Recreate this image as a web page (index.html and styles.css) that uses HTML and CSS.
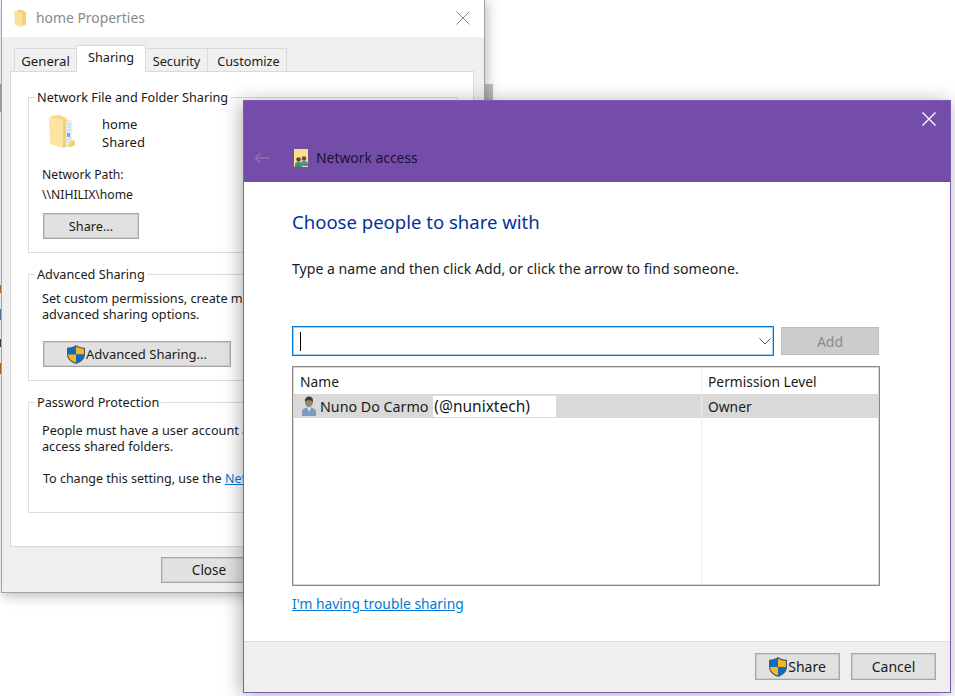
FILE: index.html
```html
<!DOCTYPE html>
<html lang="en">
<head>
    <meta charset="UTF-8">
    <title>home Properties</title>
    <link rel="stylesheet" href="styles.css">
</head>
<body>

<svg width="0" height="0" class="defs">
    <symbol id="shield" viewBox="1 0.5 16 19.2" preserveAspectRatio="none">
        <path d="M9 .6C6.800 2.400 4 3.200 1 3.200V10c0 4.600 3.400 7.800 8 9.600 4.600-1.800 8-5 8-9.600V3.200C14 3.200 11.200 2.400 9 .6z" fill="#4a5a6a"/>
        <path d="M9 2C7 3.400 4.600 4.200 2 4.300V10h7z" fill="#0f6cc4"/>
        <path d="M9 2c2 1.400 4.400 2.200 7 2.300V10H9z" fill="#f8b71c"/>
        <path d="M2 10c0 3.900 3 6.600 7 8.300V10z" fill="#f8b71c"/>
        <path d="M16 10c0 3.900-3 6.600-7 8.300V10z" fill="#0f6cc4"/>
    </symbol>
    <symbol id="folder" viewBox="0 0 26 33">
        <path d="M2 1l8-1 8 3v2l5 1v24l-14 2z" fill="#f6d98a"/>
        <rect x="17" y="6" width="6" height="26" fill="#e9eef1"/>
        <path d="M18 9h4M18 12h4M18 15h4M18 24h4M18 27h4" stroke="#c3d2de" stroke-width="1"/>
        <rect x="18" y="18" width="3" height="4" fill="#6aaedd"/>
        <path d="M23 25l3 1v5l-7 1v-2z" fill="#f3d270"/>
        <path d="M0 2l14 3v28L1 29z" fill="#fbe5a0"/>
        <path d="M14 5l3 .5V32l-3 1z" fill="#f0cf72"/>
    </symbol>
</svg>

<i class="behind spot-a"></i>
<i class="behind spot-b"></i>
<i class="behind spot-c"></i>
<i class="behind spot-d"></i>
<i class="behind spot-e"></i>
<i class="behind spot-f"></i>

<div class="window props">
    <div class="titlebar">
        <svg class="title-folder" width="12" height="17" viewBox="0 0 12 17">
            <path d="M3 0h5l4 2v13l-5 1z" fill="#f4d27a"/>
            <path d="M0 1l8 2v14l-7-2z" fill="#fbe29a"/>
        </svg>
        <span class="title-text">home Properties</span>
        <svg class="title-close" width="14" height="14" viewBox="0 0 14 14"><path d="M.5.500l13 13M13.500.500l-13 13" stroke="#8a8a8a" stroke-width="1"/></svg>
    </div>

    <div class="tabs">
        <div class="tab tab-general">General</div>
        <div class="tab tab-sharing active">Sharing</div>
        <div class="tab tab-security">Security</div>
        <div class="tab tab-customize">Customize</div>
    </div>

    <div class="panel">
        <fieldset class="group">
            <legend>Network File and Folder Sharing</legend>
            <div class="share-item">
                <svg width="26" height="33"><use href="#folder"/></svg>
                <div class="share-name">home<br>Shared</div>
            </div>
            <div class="path-label">Network Path:</div>
            <div class="path-value">\\NIHILIX\home</div>
            <button class="btn btn-share">Share...</button>
        </fieldset>

        <fieldset class="group">
            <legend>Advanced Sharing</legend>
            <p class="copy">Set custom permissions, create multiple shares, and set other<br>advanced sharing options.</p>
            <button class="btn btn-advanced"><svg width="18" height="19"><use href="#shield"/></svg>Advanced Sharing...</button>
        </fieldset>

        <fieldset class="group group-last">
            <legend>Password Protection</legend>
            <p class="copy">People must have a user account and password for this computer to<br>access shared folders.</p>
            <p class="copy copy-next">To change this setting, use the <a href="#">Network and Sharing Center</a>.</p>
        </fieldset>
    </div>

    <div class="props-footer">
        <button class="btn btn-close">Close</button>
    </div>
</div>

<div class="window dialog">
    <div class="dialog-head">
        <svg class="dialog-close" width="14" height="14" viewBox="0 0 14 14"><path d="M.5.500l13 13M13.500.500l-13 13" stroke="#fff" stroke-width="1.300"/></svg>
        <div class="head-row">
            <svg class="back" width="16" height="12" viewBox="0 0 16 12"><path d="M15.500 6H1.500M6.500 1l-5 5 5 5" fill="none" stroke="#8a6fb2" stroke-width="1.400"/></svg>
            <svg class="net-icon" width="14" height="18" viewBox="0 0 14 18">
                <rect width="14" height="18" fill="#fbe08c"/>
                <circle cx="4.500" cy="10.500" r="2.300" fill="#5a4632"/>
                <path d="M1 18v-2.500C1 14 2.500 13 4.500 13S8 14 8 15.500V18z" fill="#3f8f6a"/>
                <circle cx="10" cy="9.500" r="2.300" fill="#6a5238"/>
                <path d="M6.500 17v-2.500c0-1.500 1.500-2.500 3.500-2.500s4 1 4 2.500V17z" fill="#3f8fb5"/>
            </svg>
            <span class="head-title">Network access</span>
        </div>
    </div>

    <div class="dialog-body">
        <h1 class="heading">Choose people to share with</h1>
        <p class="lead">Type a name and then click Add, or click the arrow to find someone.</p>

        <div class="add-row">
            <div class="combo">
                <span class="caret"></span>
                <svg class="chevron" width="12" height="7" viewBox="0 0 12 7"><path d="M.5.500L6 6 11.500.500" fill="none" stroke="#555" stroke-width="1"/></svg>
            </div>
            <button class="btn-add" disabled>Add</button>
        </div>

        <table class="people">
            <tr class="people-head">
                <th class="col-name">Name</th>
                <th>Permission Level</th>
            </tr>
            <tr class="people-row">
                <td class="col-name">
                    <div class="person">
                        <svg width="16" height="20" viewBox="0 0 16 20">
                            <path d="M1 20v-4c0-3 3-4.500 7-4.500s7 1.500 7 4.500v4z" fill="#7a9cc0"/>
                            <path d="M6 11.500h4L8.500 16z" fill="#dfe7ee"/>
                            <ellipse cx="8" cy="6" rx="4" ry="5" fill="#9c8570"/>
                            <path d="M4 6C3.500 2 6 .5 8 .5s4.500 1.500 4 5.500C11 3.500 5 3.500 4 6z" fill="#3f3a38"/>
                        </svg>
                        <span class="person-name">Nuno Do Carmo</span>
                        <span class="person-handle">(@nunixtech)</span>
                    </div>
                </td>
                <td>Owner</td>
            </tr>
            <tr class="people-rest">
                <td class="col-name"></td>
                <td></td>
            </tr>
        </table>

        <a class="trouble" href="#">I'm having trouble sharing</a>
    </div>

    <div class="dialog-footer">
        <button class="btn btn-wide"><svg width="18" height="20"><use href="#shield"/></svg>Share</button>
        <button class="btn btn-wide">Cancel</button>
    </div>
</div>

</body>
</html>
```

FILE: styles.css
```css
html, body {
    margin: 0;
    height: 100%;
}

body {
    position: relative;
    overflow: hidden;
    background-color: #ffffff;
    font-family: "Noto Sans", "Open Sans", sans-serif;
    font-size: 12.7px;
    color: #1a1a1a;
}

.defs {
    position: absolute;
}

/* bits of whatever sits behind the two windows */
.behind {
    position: absolute;
    display: block;
}

.spot-a { left: 0; top: 84px; width: 1px; height: 28px; background-color: #a8a8a8; }
.spot-b { left: 0; top: 285px; width: 1px; height: 8px; background-color: #c77a1c; }
.spot-c { left: 0; top: 309px; width: 1px; height: 11px; background-color: #5c7fa8; }
.spot-d { left: 0; top: 339px; width: 1px; height: 8px; background-color: #444444; }
.spot-e { left: 0; top: 363px; width: 1px; height: 11px; background-color: #b86a10; }
.spot-f { left: 484px; top: 84px; width: 9px; height: 16px; background-color: #c4c4c4; }

.window {
    position: absolute;
    box-sizing: border-box;
    display: flex;
    flex-direction: column;
}

/* Properties window */
.props {
    left: 1px;
    top: -1px;
    width: 484px;
    height: 594px;
    background-color: #efefef;
    border: 1px solid #a3a3a3;
    box-shadow: 2px 3px 12px rgba(0, 0, 0, 0.28);
}

.titlebar {
    box-sizing: border-box;
    display: flex;
    align-items: center;
    height: 37px;
    flex-shrink: 0;
    padding: 0 14px 1px 12px;
    background-color: #ffffff;
}

.title-text {
    margin-left: 10px;
    padding-bottom: 2px;
    font-size: 13.9px;
    color: #8a8a8a;
}

.title-close {
    margin-left: auto;
}

.tabs {
    display: flex;
    align-items: flex-end;
    height: 34px;
    padding-left: 12px;
    box-sizing: border-box;
}

.tab {
    box-sizing: border-box;
    height: 23px;
    text-align: center;
    line-height: 25px;
    background-color: #f0f0f0;
    border: 1px solid #d9d9d9;
    border-bottom: none;
    margin-left: -1px;
}

.tab-general { width: 63px; margin-left: 0; font-size: 13.2px; }
.tab-sharing { width: 70px; }
.tab-security { width: 63px; }
.tab-customize { width: 79px; margin-left: 0; padding-left: 3px; border-left: none; }

.tab.active {
    position: relative;
    height: 27px;
    margin-bottom: -1px;
    line-height: 22px;
    background-color: #ffffff;
}

.panel {
    box-sizing: border-box;
    height: 476px;
    margin: 0 10px 0 8px;
    padding: 16px 15px 0 17px;
    background-color: #ffffff;
    border: 1px solid #d9d9d9;
}

.group {
    margin: 0 0 12px;
    padding: 0 13px 13px;
    border: 1px solid #dcdcdc;
    min-width: 0;
}

.group-last {
    margin-bottom: 0;
    padding-bottom: 25px;
}

.group-last .copy:first-of-type {
    margin-top: 11px;
}

.group legend {
    margin-left: -7px;
    padding: 0 2px;
    line-height: 18px;
}

.share-item {
    display: flex;
    align-items: flex-start;
    padding: 9px 0 0 7px;
}

.share-name {
    margin-left: 27px;
    font-size: 13px;
    line-height: 18px;
}

.path-label {
    margin-top: 15px;
    font-size: 12.2px;
    line-height: 18px;
}

.path-value {
    margin-top: 2px;
    font-size: 12.2px;
    line-height: 18px;
}

.copy {
    margin: 7px 0 0;
    line-height: 16px;
    white-space: nowrap;
}

.group-last .copy-next {
    margin: 17px 0 0 1px;
    font-size: 12.5px;
}

.copy a {
    color: #0078d7;
}

.btn {
    box-sizing: border-box;
    display: flex;
    align-items: center;
    justify-content: center;
    gap: 1px;
    height: 26px;
    padding: 0;
    background-color: #e1e1e1;
    border: 1px solid #a6a6a6;
    box-shadow: inset 0 0 0 1px rgba(173, 173, 173, 0.35);
    font: inherit;
    color: inherit;
}

.btn-share {
    width: 96px;
    margin: 9px 0 0 1px;
}

.btn-advanced {
    width: 188px;
    margin: 19px 0 0 1px;
    font-size: 13px;
}

.props-footer {
    padding: 10px 0 0 159px;
}

.btn-close {
    width: 96px;
    font-size: 13.5px;
}

/* Network access dialog */
.dialog {
    left: 243px;
    top: 100px;
    width: 708px;
    height: 593px;
    background-color: #ffffff;
    border: 1px solid #7e5cb5;
    box-shadow: -2px 2px 18px rgba(0, 0, 0, 0.32);
}

.dialog-head {
    display: flex;
    flex-direction: column;
    flex-shrink: 0;
    height: 81px;
    background-color: #744da9;
}

.dialog-close {
    align-self: flex-end;
    margin: 11px 14px 0 0;
}

.head-row {
    display: flex;
    align-items: center;
    margin-top: 22px;
    padding-left: 10px;
}

.back {
    margin-right: 24px;
}

.head-title {
    margin-left: 8px;
    font-size: 13.9px;
    color: #1c1233;
}

.dialog-body {
    flex: 1;
    padding: 27px 0 0 48px;
}

.heading {
    margin: 0;
    font-size: 18.55px;
    font-weight: 400;
    line-height: 26px;
    color: #003399;
}

.lead {
    margin: 24px 0 0;
    font-size: 14.1px;
    line-height: 20px;
}

.add-row {
    display: flex;
    align-items: center;
    gap: 7px;
    margin-top: 47px;
}

.combo {
    box-sizing: border-box;
    display: flex;
    align-items: center;
    width: 482px;
    height: 30px;
    padding: 0 2px 0 7px;
    border: 1px solid #0078d7;
    box-shadow: inset 0 0 0 1px rgba(0, 120, 215, 0.35);
}

.caret {
    width: 1px;
    height: 19px;
    background-color: #000000;
}

.chevron {
    margin-left: auto;
}

.btn-add {
    box-sizing: border-box;
    width: 98px;
    height: 28px;
    padding: 0;
    background-color: #cccccc;
    border: 1px solid #bdbdbd;
    font: inherit;
    font-size: 14px;
    color: #8a8a8a;
}

.people {
    box-sizing: border-box;
    width: 588px;
    height: 220px;
    margin-top: 10px;
    padding: 1px;
    border: 1px solid #8a8a8a;
    box-shadow: inset 0 0 0 1px rgba(138, 138, 138, 0.35);
    border-collapse: separate;
    border-spacing: 0;
    table-layout: fixed;
    font-size: 13.8px;
}

.people th,
.people td {
    padding: 1px 0 0 6px;
    font-weight: 400;
    text-align: left;
}

.people .col-name {
    width: 401px;
    border-right: 1px solid #ececec;
}

.people-head {
    height: 26px;
}

.people-row {
    height: 24px;
    background-color: #d9d9d9;
}

.person {
    display: flex;
    align-items: center;
    margin: -1px 0 0 1px;
}

.person-name {
    margin-left: 3px;
    font-size: 14.25px;
}

.person-handle {
    box-sizing: border-box;
    width: 123px;
    height: 21px;
    margin-left: 5px;
    padding-left: 1px;
    font-size: 15.5px;
    line-height: 20px;
    background-color: #ffffff;
}

.trouble {
    display: block;
    width: max-content;
    margin-top: 8px;
    font-size: 13.85px;
    line-height: 20px;
    color: #0078d7;
}

.dialog-footer {
    box-sizing: border-box;
    display: flex;
    justify-content: flex-end;
    gap: 11px;
    flex-shrink: 0;
    height: 51px;
    padding: 11px 14px 0 0;
    background-color: #efefef;
    border-top: 1px solid #dfdfdf;
}

.btn-wide {
    width: 85px;
    height: 27px;
    font-size: 14px;
}
```
